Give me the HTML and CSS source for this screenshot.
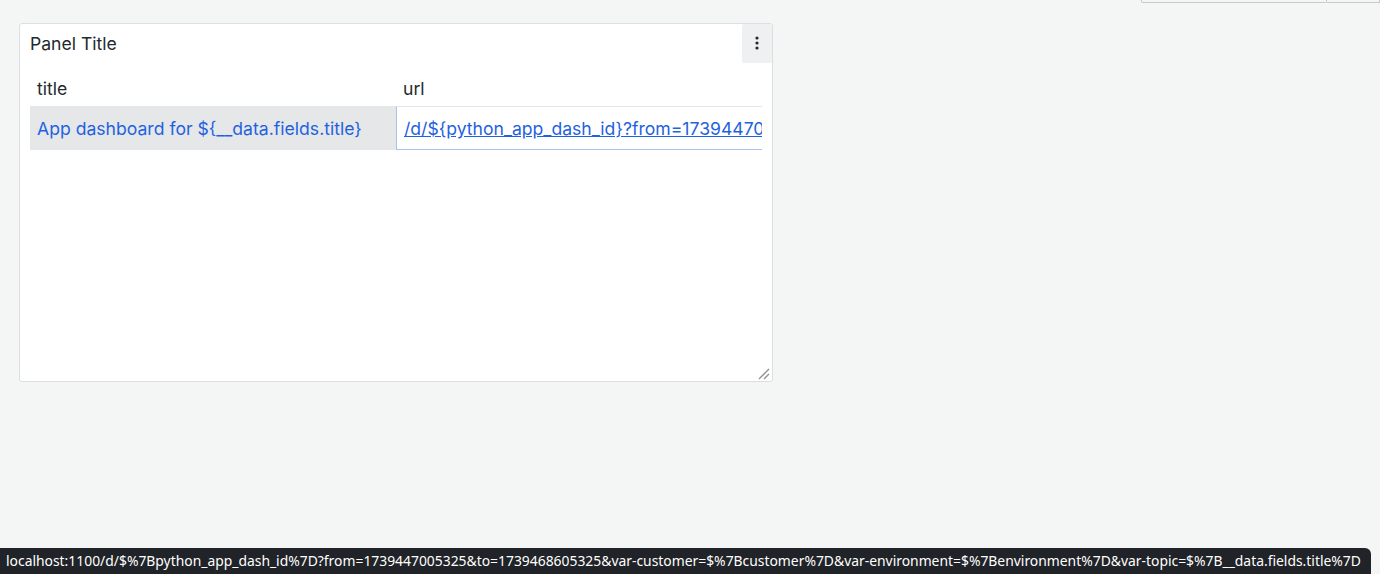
FILE: index.html
```html
<!DOCTYPE html>
<html lang="en">
<head>
    <meta charset="UTF-8">
    <title>Panel Title</title>
    <link rel="stylesheet" href="styles.css">
</head>
<body>
<div class="topbar">
    <div class="btn-group">
        <div class="btn-main"></div>
        <div class="btn-side"></div>
    </div>
</div>
<div class="panel">
    <div class="panel-header">
        <div class="panel-title">Panel Title</div>
        <div class="panel-menu">
            <svg width="4" height="14" viewBox="0 0 4 14"><circle cx="2" cy="2" r="1.6" fill="#24292e"/><circle cx="2" cy="7" r="1.6" fill="#24292e"/><circle cx="2" cy="12" r="1.6" fill="#24292e"/></svg>
        </div>
    </div>
    <div class="panel-body">
        <div class="table">
            <div class="thead">
                <div class="th">title</div>
                <div class="th">url</div>
            </div>
            <div class="tr">
                <div class="td td-hover"><a href="#">App dashboard for ${__data.fields.title}</a></div>
                <div class="td td-url"><a href="#" class="link-u">/d/${python_app_dash_id}?from=17394470</a></div>
            </div>
        </div>
    </div>
    <svg class="resize" width="12" height="12" viewBox="0 0 12 12"><path d="M1 11 L11 1 M6 11 L11 6" stroke="#8e8e8e" stroke-width="1.3"/></svg>
</div>
<div class="statusbar">localhost:1100/d/$%7Bpython_app_dash_id%7D?from=1739447005325&amp;to=1739468605325&amp;var-customer=$%7Bcustomer%7D&amp;var-environment=$%7Benvironment%7D&amp;var-topic=$%7B__data.fields.title%7D</div>
</body>
</html>
```

FILE: styles.css
```css
body { margin: 0; background: #f4f5f5; font-family: Inter, 'Noto Sans', sans-serif; color: #24292e; height: 574px; overflow: hidden; }
.topbar { display: flex; justify-content: flex-end; height: 3px; }
.btn-group { display: flex; width: 239px; height: 3px; }
.btn-main { flex: 1; border: 1px solid #c7c9cc; border-top: none; border-radius: 0 0 2px 2px; }
.btn-side { width: 52px; border: 1px solid #c7c9cc; border-top: none; border-left: none; }

.panel { position: relative; margin: 20px 0 0 19px; width: 754px; height: 359px; box-sizing: border-box; background: #fff; border: 1px solid #dcdee1; border-radius: 3px; }
.panel-header { display: flex; align-items: center; height: 39px; padding-left: 10px; }
.panel-title { flex: 1; font-size: 17.6px; font-weight: 400; }
.panel-menu { width: 30px; height: 39px; margin-top: -1px; background: #eff0f1; border-radius: 2px; display: flex; align-items: center; justify-content: center; }

.panel-body { padding: 7px 10px 0 10px; }
.table { width: 732px; font-size: 17.6px; }
.thead, .tr { display: grid; grid-template-columns: 366px 366px; }
.th { height: 36px; line-height: 38px; padding-left: 7px; }
.td { height: 44px; box-sizing: border-box; line-height: 46px; padding-left: 7px; white-space: nowrap; overflow: hidden; }
.td a { color: #1f62e0; text-decoration: none; }
.td-hover { background: #e6e7e9; }
.td-url { border-left: 1px solid #a9c1ee; border-top: 1px solid #e4e6e9; border-bottom: 1px solid #a9c1ee; line-height: 43px; }
.td-url a.link-u { text-decoration: underline; }
.resize { position: absolute; right: 2px; bottom: 1px; }

.statusbar { position: fixed; left: 0; bottom: 0; height: 26px; line-height: 26px; padding: 0 10px 0 6px; background: #202327; color: #fff; font-family: 'Noto Sans', sans-serif; font-size: 13.88px; border-radius: 0 6px 0 0; white-space: nowrap; }
```
